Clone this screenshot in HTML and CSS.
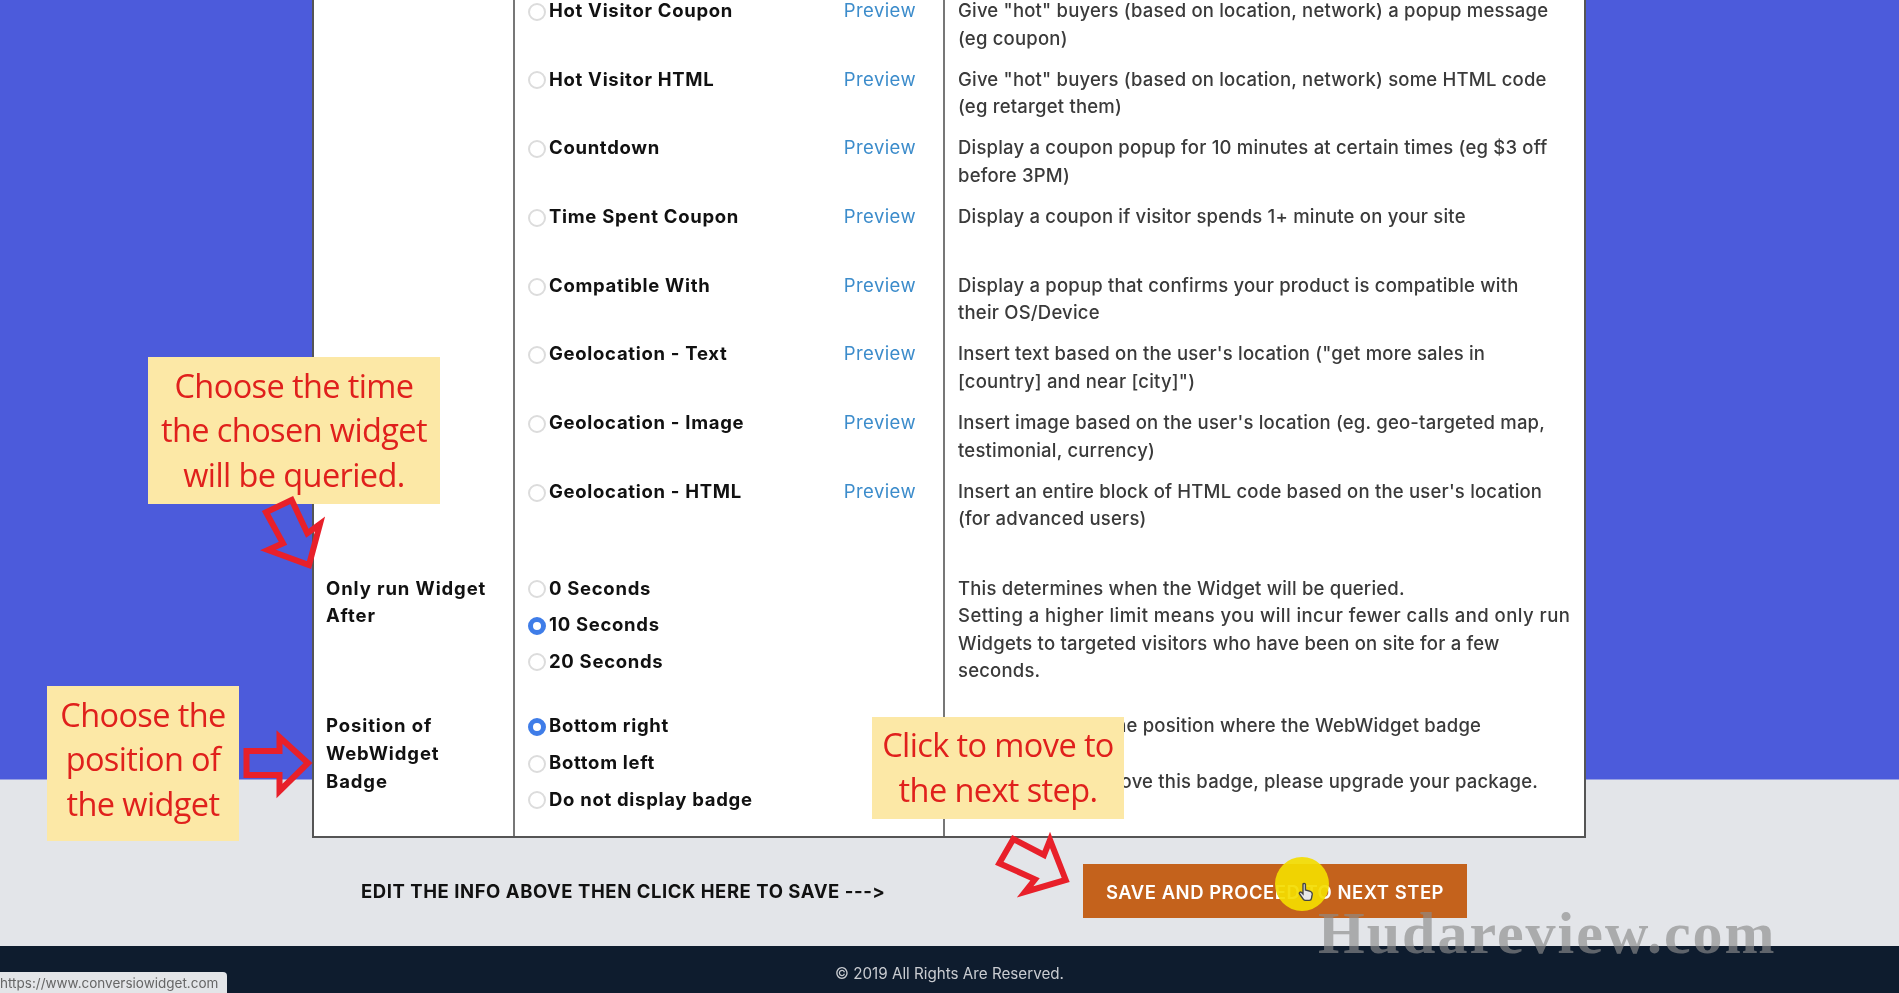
FILE: index.html
```html
<!DOCTYPE html>
<html lang="en">
<head>
<meta charset="utf-8">
<title>Widget settings</title>
<link rel="stylesheet" href="styles.css">
</head>
<body>
<main class="stage">
  <section class="table">
    <div class="row">
      <div class="col-a"></div>
      <div class="col-b"><label class="opt"><span class="radio"></span>Hot Visitor Coupon</label><a class="preview">Preview</a></div>
      <div class="col-c">Give "hot" buyers (based on location, network) a popup message<br>(eg coupon)</div>
    </div>
    <div class="row">
      <div class="col-a"></div>
      <div class="col-b"><label class="opt"><span class="radio"></span>Hot Visitor HTML</label><a class="preview">Preview</a></div>
      <div class="col-c">Give "hot" buyers (based on location, network) some HTML code<br>(eg retarget them)</div>
    </div>
    <div class="row">
      <div class="col-a"></div>
      <div class="col-b"><label class="opt"><span class="radio"></span>Countdown</label><a class="preview">Preview</a></div>
      <div class="col-c">Display a coupon popup for 10 minutes at certain times (eg $3 off<br>before 3PM)</div>
    </div>
    <div class="row">
      <div class="col-a"></div>
      <div class="col-b"><label class="opt"><span class="radio"></span>Time Spent Coupon</label><a class="preview">Preview</a></div>
      <div class="col-c">Display a coupon if visitor spends 1+ minute on your site</div>
    </div>
    <div class="row">
      <div class="col-a"></div>
      <div class="col-b"><label class="opt"><span class="radio"></span>Compatible With</label><a class="preview">Preview</a></div>
      <div class="col-c">Display a popup that confirms your product is compatible with<br>their OS/Device</div>
    </div>
    <div class="row">
      <div class="col-a"></div>
      <div class="col-b"><label class="opt"><span class="radio"></span>Geolocation - Text</label><a class="preview">Preview</a></div>
      <div class="col-c">Insert text based on the user's location ("get more sales in<br>[country] and near [city]")</div>
    </div>
    <div class="row">
      <div class="col-a"></div>
      <div class="col-b"><label class="opt"><span class="radio"></span>Geolocation - Image</label><a class="preview">Preview</a></div>
      <div class="col-c">Insert image based on the user's location (eg. geo-targeted map,<br>testimonial, currency)</div>
    </div>
    <div class="row row-html">
      <div class="col-a"></div>
      <div class="col-b"><label class="opt"><span class="radio"></span>Geolocation - HTML</label><a class="preview">Preview</a></div>
      <div class="col-c">Insert an entire block of HTML code based on the user's location<br>(for advanced users)</div>
    </div>
    <div class="row row-run">
      <div class="col-a name">Only run Widget<br>After</div>
      <div class="col-b stack">
        <label class="opt"><span class="radio"></span>0 Seconds</label>
        <label class="opt"><span class="radio on"></span>10 Seconds</label>
        <label class="opt"><span class="radio"></span>20 Seconds</label>
      </div>
      <div class="col-c">This determines when the Widget will be queried.<br><span class="wide">Setting a higher limit means you will incur fewer calls and only run</span><br>Widgets to targeted visitors who have been on site for a few<br>seconds.</div>
    </div>
    <div class="row row-last">
      <div class="col-a name">Position of<br>WebWidget<br>Badge</div>
      <div class="col-b stack">
        <label class="opt"><span class="radio on"></span>Bottom right</label>
        <label class="opt"><span class="radio"></span>Bottom left</label>
        <label class="opt"><span class="radio"></span>Do not display badge</label>
      </div>
      <div class="col-c">This determines the position where the WebWidget badge<br>will appear.<br>If you want to remove this badge, please upgrade your package.</div>
    </div>
  </section>

  <section class="save">
    <p class="save-note">EDIT THE INFO ABOVE THEN CLICK HERE TO SAVE ---&gt;</p>
    <button class="save-btn">SAVE AND PROCEED TO NEXT STEP</button>
  </section>

  <footer class="footer">© 2019 All Rights Are Reserved.</footer>

  <div class="status">https://www.conversiowidget.com</div>

  <div class="note note-time">Choose the time<br>the chosen widget<br>will be queried.</div>
  <div class="note note-pos">Choose the<br>position of<br>the widget</div>
  <div class="note note-next">Click to move to<br>the next step.</div>

  <svg class="arrows" viewBox="0 0 1899 993" aria-hidden="true">
    <polygon points="291.7,500 266,512.3 283,543.3 268,550 309,565 320,524 307.3,533.3"/>
    <polygon points="246.5,751 279.5,751 279.5,737 308,763 279.5,791 279.5,775 246.5,775"/>
    <polygon points="1013.3,839 999.3,863.3 1035,879.3 1025,892 1065.7,880 1050,840 1044,855"/>
  </svg>

  <div class="spot"></div>
  <svg class="hand" viewBox="0 0 16 20" aria-hidden="true">
    <path d="M5 2.5c0-1.5 2.4-1.5 2.4 0V8l5 1.4c1.6.5 2 1.4 1.8 3l-.7 4c-.2 1.2-1 2-2.2 2H7.5c-1 0-1.7-.4-2.3-1.3L1.6 12c-.9-1.3.8-2.6 2-1.5L5 12z" fill="#e8e8e8" stroke="#444" stroke-width="1.4"/>
  </svg>

  <div class="mark">Hudareview.com</div>
</main>
</body>
</html>
```
FILE: styles.css
```css
* { box-sizing: border-box; }
html, body { margin: 0; height: 100%; overflow: hidden; }
body {
  font-family: Inter, "Liberation Sans", sans-serif;
  font-variant-ligatures: none;
  color: #222;
}

.stage {
  position: relative;
  height: 993px;
  overflow: hidden;
  display: flex;
  flex-direction: column;
  background: linear-gradient(#4c5bdb 0, #4c5bdb 779px, #e3e5e9 780px);
  filter: blur(0.4px);
}

.table {
  width: 1274px;
  margin: -3px 0 0 312px;
  background: #fff;
  border: solid #555;
  border-width: 0 2px 2px 2px;
  font-size: 18.5px;
  line-height: 27.6px;
  flex: none;
}
.row { display: grid; grid-template-columns: 201px 430px 1fr; min-height: 68.7px; }
.col-a, .col-b, .col-c { padding-bottom: 13.5px; }
.row-html > div { padding-bottom: 41.5px; }
.row-run > div { padding-bottom: 27.5px; }
.row-last > div { padding-bottom: 23px; }
.col-a { padding-left: 12px; border-right: 2px solid #777; }
.col-b {
  display: flex;
  justify-content: space-between;
  align-items: flex-start;
  padding-left: 13px;
  padding-right: 27px;
  border-right: 2px solid #777;
}
.col-c { padding-left: 13px; color: #3a3a3a; font-weight: 500; letter-spacing: 0.2px; white-space: nowrap; }
.wide { letter-spacing: 0.45px; }
.stack { flex-direction: column; justify-content: flex-start; gap: 9px; }
.name { font-weight: 700; color: #111; letter-spacing: 0.9px; }
.opt { display: flex; align-items: center; gap: 3px; font-weight: 700; color: #111; letter-spacing: 0.7px; white-space: nowrap; }
.preview { color: #3c8ccb; letter-spacing: 0.4px; }
.radio {
  width: 18px;
  height: 18px;
  flex: none;
  border-radius: 50%;
  background: #fff;
  border: 2px solid #dcdcdc;
  position: relative;
  top: 1px;
}
.radio.on { background: #fff; border: 5px solid #3f7de8; }

.save {
  flex: none;
  height: 108px;
  display: flex;
  align-items: flex-start;
}
.save-note {
  margin: 39px 0 0 361px;
  font-size: 18.5px;
  line-height: 28px;
  font-weight: 700;
  letter-spacing: 0.55px;
  color: #111;
}
.save-btn {
  margin: 26px 432px 0 auto;
  width: 384px;
  height: 54px;
  border: 0;
  background: #c4621c;
  color: #fff;
  font: 600 18.5px/54px Inter, "Liberation Sans", sans-serif;
  letter-spacing: 0.5px;
  font-variant-ligatures: none;
}

.footer {
  flex: 1;
  background: #0e1c2e;
  color: #c9ccd1;
  font-size: 15.2px;
  text-align: center;
  padding-top: 17px;
  line-height: 22px;
}

.status {
  position: absolute;
  left: 0;
  bottom: 0;
  width: 227px;
  height: 21px;
  background: #e3e5e8;
  border-radius: 0 4px 0 0;
  color: #666;
  font-size: 13.5px;
  line-height: 22px;
  white-space: nowrap;
  overflow: hidden;
}

.note {
  position: absolute;
  background: #fce8a6;
  color: #e0201c;
  font-family: "Open Sans", "Noto Sans", sans-serif;
  font-size: 32.5px;
  letter-spacing: -0.6px;
  line-height: 44.6px;
  text-align: center;
  display: flex;
  align-items: center;
  justify-content: center;
}
.note-time { left: 148px; top: 357px; width: 292px; height: 147px; }
.note-pos { left: 47px; top: 686px; width: 192px; height: 155px; padding-bottom: 8px; }
.note-next { left: 872px; top: 717px; width: 252px; height: 102px; }

.arrows {
  position: absolute;
  inset: 0;
  width: 1899px;
  height: 993px;
  pointer-events: none;
}
.arrows polygon { fill: none; stroke: #e8202a; stroke-width: 6; stroke-linejoin: miter; }

.spot {
  position: absolute;
  left: 1275px;
  top: 857px;
  width: 54px;
  height: 54px;
  border-radius: 50%;
  background: rgba(243, 220, 0, 0.92);
}
.hand { position: absolute; left: 1298px; top: 882px; width: 16px; height: 20px; }

.mark {
  position: absolute;
  left: 1318px;
  top: 900px;
  font-family: "Liberation Serif", serif;
  font-weight: 700;
  font-size: 60px;
  line-height: 66px;
  letter-spacing: 2px;
  color: rgba(140, 140, 140, 0.65);
  white-space: nowrap;
}
```
